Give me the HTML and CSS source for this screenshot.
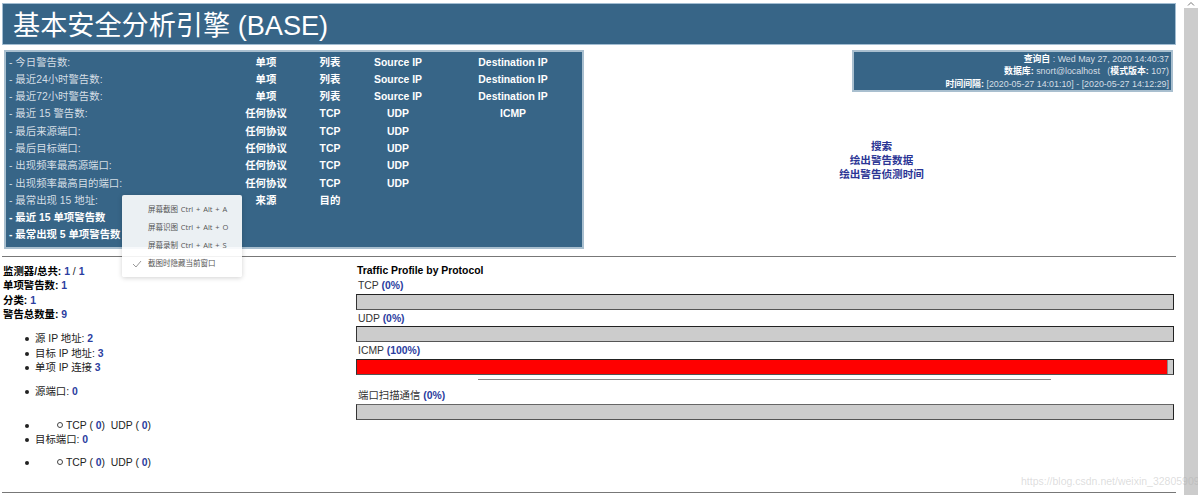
FILE: index.html
```html
<!DOCTYPE html>
<html lang="zh">
<head>
<meta charset="utf-8">
<title>基本安全分析引擎 (BASE)</title>
<link rel="stylesheet" href="styles.css">
</head>
<body>
<div class="shell">
  <main class="page">
    <h1 class="title">基本安全分析引擎 (BASE)</h1>
    <section class="top">
      <nav class="panel nav">
        <span>- 今日警告数:</span><a>单项</a><a>列表</a><a>Source IP</a><a>Destination IP</a>
        <span>- 最近24小时警告数:</span><a>单项</a><a>列表</a><a>Source IP</a><a>Destination IP</a>
        <span>- 最近72小时警告数:</span><a>单项</a><a>列表</a><a>Source IP</a><a>Destination IP</a>
        <span>- 最近 15 警告数:</span><a>任何协议</a><a>TCP</a><a>UDP</a><a>ICMP</a>
        <span>- 最后来源端口:</span><a>任何协议</a><a>TCP</a><a>UDP</a><i></i>
        <span>- 最后目标端口:</span><a>任何协议</a><a>TCP</a><a>UDP</a><i></i>
        <span>- 出现频率最高源端口:</span><a>任何协议</a><a>TCP</a><a>UDP</a><i></i>
        <span>- 出现频率最高目的端口:</span><a>任何协议</a><a>TCP</a><a>UDP</a><i></i>
        <span>- 最常出现 15 地址:</span><a>来源</a><a>目的</a><i></i><i></i>
        <b class="wide">- 最近 15 单项警告数</b>
        <b class="wide">- 最常出现 5 单项警告数</b>
      </nav>
      <div class="side">
        <div class="panel info">
          <div><b>查询自</b> : Wed May 27, 2020 14:40:37</div>
          <div><b>数据库:</b> snort@localhost &nbsp; (<b>模式版本:</b> 107)</div>
          <div><b>时间间隔:</b> [2020-05-27 14:01:10] - [2020-05-27 14:12:29]</div>
        </div>
        <div class="links">
          <a>搜索</a>
          <a>绘出警告数据</a>
          <a>绘出警告侦测时间</a>
        </div>
      </div>
    </section>
    <hr class="rule first">
    <section class="stats">
      <div class="left">
        <div class="counts">
          <div><b>监测器/总共:</b> <a>1</a> / <a>1</a></div>
          <div><b>单项警告数:</b> <a>1</a></div>
          <div><b>分类:</b> <a>1</a></div>
          <div><b>警告总数量:</b> <a>9</a></div>
        </div>
        <ul class="list">
          <li>源 IP 地址: <a>2</a></li>
          <li>目标 IP 地址: <a>3</a></li>
          <li>单项 IP 连接 <a>3</a></li>
          <li class="port">源端口: <a>0</a></li>
          <li class="sub"><ul><li>TCP ( <a>0</a>) &nbsp;UDP ( <a>0</a>)</li></ul></li>
          <li>目标端口: <a>0</a></li>
          <li class="sub next"><ul><li>TCP ( <a>0</a>) &nbsp;UDP ( <a>0</a>)</li></ul></li>
        </ul>
      </div>
      <div class="right">
        <div class="heading">Traffic Profile by Protocol</div>
        <div class="label">TCP <a>(0%)</a></div>
        <div class="bar"></div>
        <div class="label">UDP <a>(0%)</a></div>
        <div class="bar"></div>
        <div class="label">ICMP <a>(100%)</a></div>
        <div class="bar"><div class="fill" style="width:99.4%"></div></div>
        <hr class="mini">
        <div class="label scan">端口扫描通信 <a>(0%)</a></div>
        <div class="bar dim"></div>
      </div>
    </section>
    <hr class="rule last">
  </main>
  <div class="scrollbar"><svg class="arrow" width="8" height="5" viewBox="0 0 8 5"><path d="M1 4 4 1l3 3" fill="none" stroke="#777" stroke-width="1"/></svg><div class="thumb"></div></div>
</div>
<div class="menu">
  <div class="item">屏幕截图 Ctrl + Alt + A</div>
  <div class="item">屏幕识图 Ctrl + Alt + O</div>
  <div class="item">屏幕录制 Ctrl + Alt + S</div>
  <div class="item"><svg class="check" width="10" height="8" viewBox="0 0 10 8"><path d="M1 4l3 3 5-6" fill="none" stroke="#999" stroke-width="1"/></svg>截图时隐藏当前窗口</div>
</div>
<div class="mark">https://blog.csdn.net/weixin_32805909</div>
</body>
</html>
```
FILE: styles.css
```css
* { box-sizing: border-box; }
html, body { margin: 0; height: 495px; overflow: hidden; background: #fff; }
body { font: 10.4px/14.3px "Liberation Sans", "Noto Sans CJK SC", sans-serif; color: #333; }
.shell { display: flex; height: 495px; }
.page { width: 1184px; flex: none; padding: 3px 8px 0 2px; }
.scrollbar { width: 14px; flex: none; display: flex; flex-direction: column; align-items: center; }
.arrow { margin-top: 1px; height: 6px; flex: none; }
.thumb { flex: 1; width: 14px; background: #ccc; margin-top: 1px; }

.title { margin: 0; height: 42px; padding-left: 10px; background: #376587; border: 1px solid #a2bdd2; color: #fff; font-weight: 400; font-size: 27.15px; line-height: 44px; }

.top { display: flex; margin: 5px 0 0 2px; height: 199px; }
.panel { background: #376587; border: 2px solid #a9bfcf; color: #d5dee5; }
.nav { width: 580px; flex: none; height: 199px; padding: 2px 0 0 3px; display: grid; grid-template-columns: 211px 92px 36px 100px 130px; grid-auto-rows: 17.3px; align-items: center; }
.nav a { color: #fff; font-weight: 700; text-align: center; white-space: nowrap; justify-self: center; }
.nav .wide { grid-column: 1 / -1; color: #fff; }

.side { flex: 1; margin-right: 3px; padding-left: 6px; display: flex; flex-direction: column; align-items: center; }
.info { align-self: flex-end; width: 321px; height: 42px; padding: 0.5px 2px 0 0; text-align: right; font-size: 8.9px; line-height: 12.7px; white-space: nowrap; }
.info b { color: #fff; }
.links { margin-top: 47px; display: flex; flex-direction: column; align-items: center; line-height: 14.2px; font-weight: 700; color: #2b3595; font-size: 10.6px; }

.rule { border: 0; height: 1px; background: #777; margin: 0; }
.first { margin-top: 7px; }
.stats { display: flex; height: 235px; padding: 0 0 0 1px; }
.left { width: 353px; padding-top: 7.9px; color: #222; }
.left b { color: #000; }
.left a, .right a { color: #2b3da0; font-weight: 700; }
.counts div { height: 14.4px; white-space: nowrap; }
.list { margin: 10px 0 0; padding: 0 0 0 32px; list-style: none; }
.list li { position: relative; height: 14.3px; white-space: nowrap; }
.list > li::before { content: ""; position: absolute; left: -10px; top: 5px; width: 4px; height: 4px; border-radius: 50%; background: #222; }
.list .port { margin-top: 10px; }
.list .sub { margin-top: 19px; }
.list .sub.next { margin-top: 8.8px; }
.list ul { margin: 0; padding: 0 0 0 31px; list-style: none; }
.list ul li::before { content: ""; position: absolute; left: -9px; top: 3px; width: 4px; height: 4px; background: #fff; border: 1px solid #444; border-radius: 50%; }

.right { flex: 1; padding: 7px 2px 0 0; }
.heading { font-weight: 700; color: #000; height: 13px; padding-left: 1px; }
.label { height: 14.5px; padding-left: 2px; margin-top: 2px; line-height: 14px; }
.bar { height: 16px; background: #ccc; border: 1px solid #222; border-bottom-color: #555; border-left-color: #333; }
.fill { height: 100%; background: #f00; border-right: 1px solid #888; }
.mini { border: 0; height: 1px; background: #888; width: 573px; margin: 4px 0 0 122px; }
.label.scan { margin-top: 9px; }
.dim { border-top-color: #666; margin-top: 1px; }
.last { margin-top: 0; }

.menu { position: absolute; left: 122px; top: 195px; width: 120px; height: 82px; padding-top: 5px; background: rgba(255,255,255,.9); border-radius: 2px; box-shadow: 0 1px 5px rgba(0,0,0,.18); font-family: "Open Sans", "Noto Sans CJK SC", sans-serif; font-size: 7.5px; word-spacing: .9px; color: #555; }
.item { position: relative; height: 18px; line-height: 18px; padding-left: 26px; white-space: nowrap; }
.check { position: absolute; left: 10px; top: 6px; }
.mark { position: absolute; left: 1021px; top: 474px; font-size: 10.5px; line-height: 14px; color: rgba(170,170,170,.4); white-space: nowrap; }
```
